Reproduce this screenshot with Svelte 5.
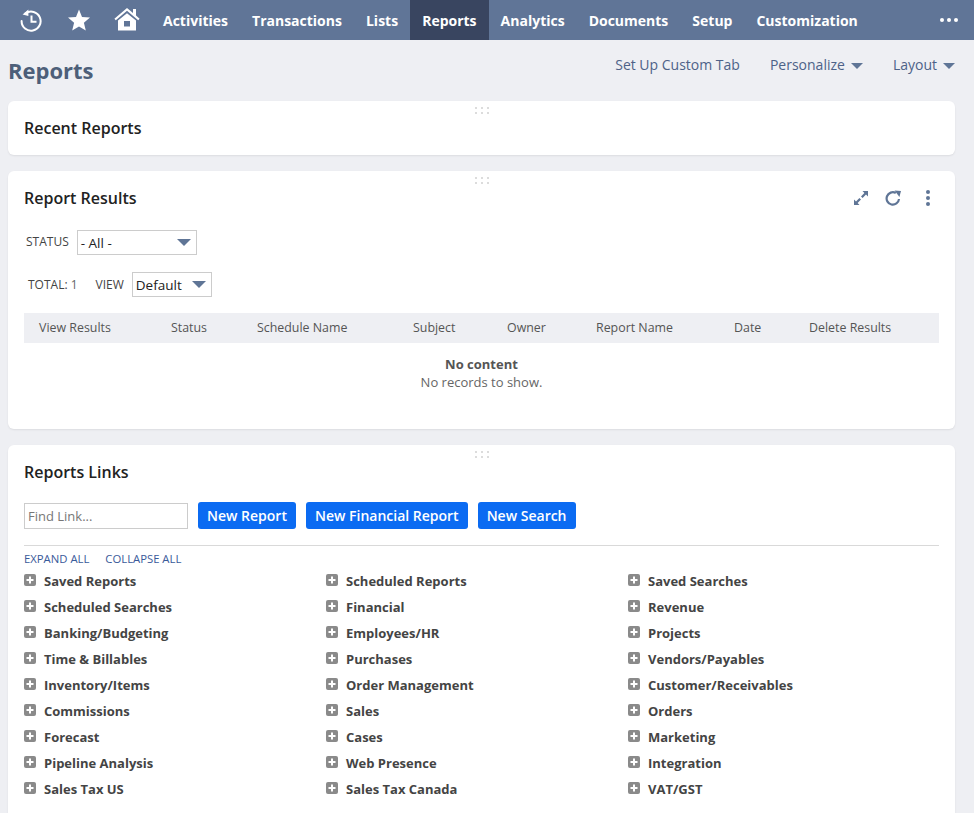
<script lang="ts">
	const navItems = ['Activities', 'Transactions', 'Lists', 'Reports', 'Analytics', 'Documents', 'Setup', 'Customization'];

	// Columns of the results table, with the width each one takes
	const columns = [
		{ label: 'View Results', width: 132 },
		{ label: 'Status', width: 86 },
		{ label: 'Schedule Name', width: 156 },
		{ label: 'Subject', width: 94 },
		{ label: 'Owner', width: 89 },
		{ label: 'Report Name', width: 138 },
		{ label: 'Date', width: 75 },
		{ label: 'Delete Results', width: 130 }
	];

	const links = [
		'Saved Reports', 'Scheduled Reports', 'Saved Searches',
		'Scheduled Searches', 'Financial', 'Revenue',
		'Banking/Budgeting', 'Employees/HR', 'Projects',
		'Time & Billables', 'Purchases', 'Vendors/Payables',
		'Inventory/Items', 'Order Management', 'Customer/Receivables',
		'Commissions', 'Sales', 'Orders',
		'Forecast', 'Cases', 'Marketing',
		'Pipeline Analysis', 'Web Presence', 'Integration',
		'Sales Tax US', 'Sales Tax Canada', 'VAT/GST'
	];
</script>

{#snippet grip()}
	<svg class="grip" viewBox="0 0 14 7" width="14" height="7" fill="#dcdcdc">
		<rect x="0" y="0" width="2" height="2" /><rect x="6" y="0" width="2" height="2" /><rect x="12" y="0" width="2" height="2" />
		<rect x="0" y="5" width="2" height="2" /><rect x="6" y="5" width="2" height="2" /><rect x="12" y="5" width="2" height="2" />
	</svg>
{/snippet}

<div class="page">
	<nav class="nav">
		<div class="nav-icons">
			<svg class="icon-recent" viewBox="0 0 24 24" width="24" height="24" fill="none" stroke="#fff" stroke-width="2">
				<path d="M6.6 5.4 A9.5 9.5 0 1 1 2.6 13" stroke-linecap="round" />
				<path d="M9.4 1.4 L9.4 8 L3.6 6.6 Z" fill="#fff" stroke="none" />
				<path d="M12.5 7.5 V13.8 H17.5" />
			</svg>
			<svg class="icon-star" viewBox="0 0 24 24" width="24" height="24" fill="#fff">
				<path d="M12 1.5 L15 9 L23 9.6 L16.9 14.8 L18.8 22.6 L12 18.4 L5.2 22.6 L7.1 14.8 L1 9.6 L9 9 Z" />
			</svg>
			<svg class="icon-home" viewBox="0 0 26 24" width="26" height="24" fill="#fff">
				<path d="M13 1 L19 6 V2 H22 V8.6 L25.6 11.8 L24.2 13.2 L13 3.8 L1.8 13.2 L0.4 11.8 Z" />
				<path fill-rule="evenodd" d="M13 6.2 L22 13.6 V23.4 H4 V13.6 Z M10 14 V19.6 H16 V14 Z" />
			</svg>
		</div>
		<ul class="nav-list">
			{#each navItems as item}
				<li class="nav-item" class:active={item === 'Reports'}>{item}</li>
			{/each}
		</ul>
		<div class="nav-more"><span></span><span></span><span></span></div>
	</nav>

	<header class="page-head">
		<h1 class="page-title">Reports</h1>
		<div class="page-actions">
			<span>Set Up Custom Tab</span>
			<span class="with-caret">Personalize <i class="caret"></i></span>
			<span class="with-caret">Layout <i class="caret"></i></span>
		</div>
	</header>

	<section class="card card-recent">
		{@render grip()}
		<h2 class="card-title">Recent Reports</h2>
	</section>

	<section class="card card-results">
		{@render grip()}
		<div class="results-head">
			<h2 class="card-title">Report Results</h2>
			<div class="tools">
				<svg viewBox="0 0 16 16" width="16" height="16" fill="#5f7596">
					<path d="M9.5 1 H15 V6.5 L13 4.6 L9.6 8 L8 6.4 L11.4 3 Z" />
					<path d="M6.5 15 H1 V9.5 L3 11.4 L6.4 8 L8 9.6 L4.6 13 Z" />
				</svg>
				<svg viewBox="0 0 16 16" width="16" height="16" fill="none">
					<path d="M14 9 A6.2 6.2 0 1 1 10.8 3" stroke="#5f7596" stroke-width="2.2" />
					<path d="M9.6 0.6 L16 1 L14.4 7 Z" fill="#5f7596" />
				</svg>
				<svg class="tool-dots" viewBox="0 0 6 16" width="6" height="16" fill="#5f7596">
					<circle cx="3" cy="2" r="2" /><circle cx="3" cy="8" r="2" /><circle cx="3" cy="14" r="2" />
				</svg>
			</div>
		</div>
		<div class="status-row">
			<span class="field-label status-label">STATUS</span>
			<div class="select select-status">- All - <i class="select-caret"></i></div>
		</div>
		<div class="total-row">
			<span class="field-label">TOTAL: <em>1</em></span>
			<span class="field-label view-label">VIEW</span>
			<div class="select select-view">Default <i class="select-caret"></i></div>
		</div>
		<div class="table-head">
			{#each columns as col}
				<span style="width: {col.width}px">{col.label}</span>
			{/each}
		</div>
		<div class="empty">
			<strong>No content</strong>
			<span>No records to show.</span>
		</div>
	</section>

	<section class="card card-links">
		{@render grip()}
		<h2 class="card-title">Reports Links</h2>
		<div class="find-row">
			<div class="find-input">Find Link...</div>
			<button class="btn">New Report</button>
			<button class="btn">New Financial Report</button>
			<button class="btn">New Search</button>
		</div>
		<div class="expand-row">
			<span>EXPAND ALL</span>
			<span>COLLAPSE ALL</span>
		</div>
		<div class="links-grid">
			{#each links as link}
				<div class="link">
					<svg viewBox="0 0 12 12" width="12" height="12">
						<rect width="12" height="12" rx="2" fill="#8a8a8a" />
						<path d="M6 2.5 V9.5 M2.5 6 H9.5" stroke="#fff" stroke-width="2" />
					</svg>
					<span>{link}</span>
				</div>
			{/each}
		</div>
	</section>
</div>

<style>
	:global(body) {
		margin: 0;
		background: #eeeff3;
		overflow: hidden;
	}

	.page {
		height: 813px;
		overflow: hidden;
		font-family: "Open Sans", sans-serif;
		color: #333;
	}

	.nav {
		display: flex;
		align-items: stretch;
		height: 40px;
		background: #607597;
		color: #fff;
	}

	.nav-icons {
		display: flex;
		align-items: center;
		padding-left: 19px;
		width: 132px;
	}

	.icon-star { margin-left: 24px; }
	.icon-home { margin-left: 23px; margin-top: -3px; }

	.nav-list {
		display: flex;
		list-style: none;
		margin: 0;
		padding: 0;
	}

	.nav-item {
		display: flex;
		align-items: center;
		padding: 0 12px;
		font-size: 14px;
		font-weight: 700;
	}

	.nav-item.active { background: #394560; }

	.nav-more {
		display: flex;
		align-items: center;
		gap: 3px;
		margin-left: auto;
		padding-right: 16px;
	}

	.nav-more span {
		width: 4px;
		height: 4px;
		border-radius: 50%;
		background: #fff;
	}

	.page-head {
		display: flex;
		justify-content: space-between;
		align-items: flex-start;
		height: 61px;
		padding: 0 19px 0 8px;
	}

	.page-title {
		margin: 14px 0 0;
		font-size: 22px;
		line-height: 32px;
		font-weight: 700;
		color: #4d5f79;
	}

	.page-actions {
		display: flex;
		align-items: center;
		gap: 30px;
		padding-top: 15px;
		font-size: 14px;
		line-height: 20px;
		color: #4d6288;
	}

	.with-caret {
		display: flex;
		align-items: center;
		gap: 6px;
	}

	.caret {
		border-left: 6px solid transparent;
		border-right: 6px solid transparent;
		border-top: 6px solid #5f7596;
		margin-top: 2px;
	}

	.card {
		position: relative;
		margin: 0 19px 16px 8px;
		padding: 0 16px;
		background: #fff;
		border-radius: 6px;
		box-shadow: 0 1px 2px rgba(0, 0, 0, 0.08);
	}

	.card-recent { height: 54px; }
	.card-results { height: 258px; }
	.card-links { height: 400px; margin-bottom: 0; }

	.grip {
		position: absolute;
		top: 6px;
		left: 467px;
	}

	.card-title {
		margin: 0;
		padding-top: 16px;
		font-size: 16px;
		line-height: 22px;
		font-weight: 600;
		color: #222;
	}

	.results-head {
		display: flex;
		justify-content: space-between;
		height: 38px;
	}

	.tools {
		display: flex;
		align-items: center;
		gap: 16px;
		padding: 16px 8px 0 0;
		height: 22px;
	}

	.tool-dots { margin-left: 8px; }

	.status-row {
		display: flex;
		align-items: center;
		gap: 8px;
		margin-top: 21px;
		padding-left: 2px;
	}

	.status-label { margin-top: -2px; }

	.field-label {
		font-size: 12px;
		line-height: 16px;
		color: #444;
	}

	.field-label em {
		font-style: normal;
		color: #666;
	}

	.select {
		position: relative;
		box-sizing: border-box;
		height: 25px;
		padding-left: 3px;
		border: 1px solid #ccc;
		font-size: 13.5px;
		line-height: 25px;
		color: #222;
	}

	.select-status { width: 120px; }
	.select-view { width: 80px; }

	.select-caret {
		position: absolute;
		right: 5px;
		top: 8px;
		border-left: 7px solid transparent;
		border-right: 7px solid transparent;
		border-top: 7px solid #5f7596;
	}

	.total-row {
		display: flex;
		align-items: center;
		margin-top: 17px;
		padding-left: 4px;
	}

	.view-label { margin-left: 18px; margin-right: 8px; }

	.table-head {
		display: flex;
		align-items: center;
		box-sizing: border-box;
		height: 30px;
		margin-top: 16px;
		padding: 0 0 2px 15px;
		background: #eeeff3;
		font-size: 12.4px;
		color: #555;
	}

	.empty {
		display: flex;
		flex-direction: column;
		align-items: center;
		margin-top: 12px;
		font-size: 13px;
		line-height: 18px;
		color: #666;
	}

	.empty strong { font-weight: 700; color: #555; }

	.find-row {
		display: flex;
		align-items: center;
		gap: 10px;
		margin-top: 19px;
	}

	.find-input {
		box-sizing: border-box;
		width: 164px;
		height: 26px;
		padding-left: 3px;
		border: 1px solid #ccc;
		font-size: 13px;
		line-height: 24px;
		color: #777;
	}

	.btn {
		height: 27px;
		padding: 0 9px;
		border: 0;
		border-radius: 3px;
		background: #0b6bf2;
		color: #fff;
		font-family: inherit;
		font-size: 14px;
		font-weight: 600;
	}

	.expand-row {
		display: flex;
		gap: 16px;
		margin-top: 16px;
		padding-top: 5px;
		border-top: 1px solid #d9d9d9;
		font-size: 11.3px;
		line-height: 15px;
		color: #3a5a9a;
	}

	.links-grid {
		display: grid;
		grid-template-columns: repeat(3, 302px);
		grid-auto-rows: 26px;
		margin-top: 2px;
	}

	.link {
		display: flex;
		align-items: center;
		gap: 8px;
		height: 26px;
		font-size: 13px;
		font-weight: 700;
		color: #444;
	}

	.link svg { margin-top: -2px; }
</style>
